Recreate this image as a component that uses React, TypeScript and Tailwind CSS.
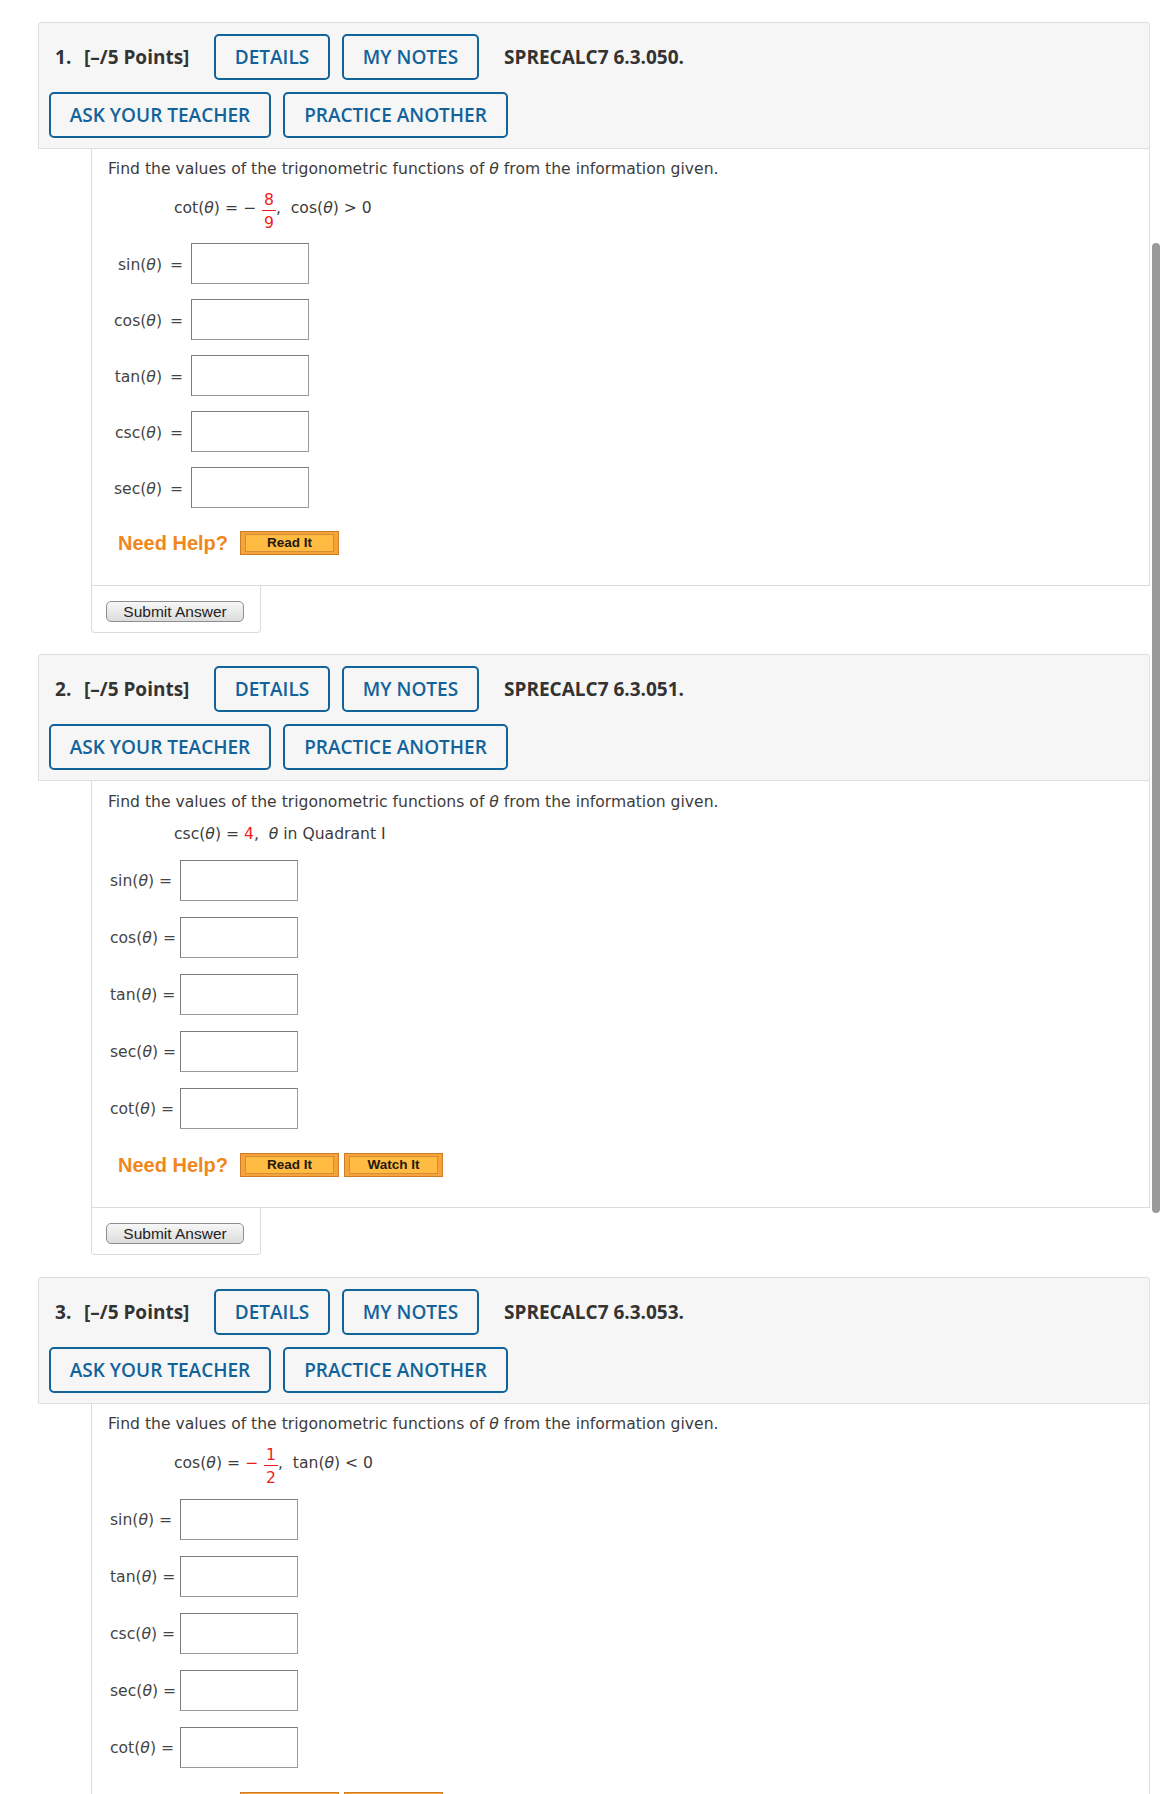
import React from "react";

const T = () => <span className="italic">θ</span>;

function Btn({ w, children }: { w: string; children: React.ReactNode }) {
  return (
    <div
      className={`${w} h-[46px] flex items-center justify-center rounded-[5px] border-2 border-[#12639a] text-[#12639a] text-[19px] font-semibold`}
      style={{ fontFamily: "'Open Sans', sans-serif" }}
    >
      {children}
    </div>
  );
}

function Header({ n, code }: { n: number; code: string }) {
  return (
    <div
      className="rounded-t-[3px] border border-[#dedede] bg-[#f6f6f6] px-[10px] pt-[11px] pb-[10px]"
      style={{ fontFamily: "'Open Sans', sans-serif" }}
    >
      <div className="flex items-center">
        <span className="ml-[6px] w-[29px] text-[19px] font-bold text-[#333]">{n}.</span>
        <span className="w-[130px] text-[19px] font-bold text-[#333]">[–/5 Points]</span>
        <Btn w="w-[116px]">DETAILS</Btn>
        <div className="w-[12px]" />
        <Btn w="w-[137px]">MY NOTES</Btn>
        <span className="ml-[25px] text-[19px] font-bold text-[#333]">SPRECALC7 {code}.</span>
      </div>
      <div className="mt-[12px] flex">
        <Btn w="w-[222px]">ASK YOUR TEACHER</Btn>
        <div className="w-[12px]" />
        <Btn w="w-[225px]">PRACTICE ANOTHER</Btn>
      </div>
    </div>
  );
}

function HelpBtn({ children }: { children: React.ReactNode }) {
  return (
    <div className="w-[99px] h-[24px] border border-[#cf7d25] bg-[#f5a33a] px-[4px] py-[2px]">
      <div
        className="h-full border border-[#d88b35] bg-[#ffbb42] flex items-center justify-center text-[13.5px] font-bold text-[#1f1a10]"
        style={{ fontFamily: "'Liberation Sans', Arial, sans-serif" }}
      >
        {children}
      </div>
    </div>
  );
}

function NeedHelp({ watch, mt }: { watch?: boolean; mt: string }) {
  return (
    <div className={`${mt} flex items-center h-[24px] ml-[10px]`}>
      <span
        className="text-[20px] font-bold text-[#f0871b] mr-[12px]"
        style={{ fontFamily: "'Liberation Sans', Arial, sans-serif" }}
      >
        Need Help?
      </span>
      <HelpBtn>Read It</HelpBtn>
      {watch && (
        <>
          <div className="w-[5px]" />
          <HelpBtn>Watch It</HelpBtn>
        </>
      )}
    </div>
  );
}

function Input() {
  return <div className="w-[118px] h-[41px] border border-[#9a9a9a] border-t-[#7b7b7b] border-l-[#7b7b7b] bg-white" />;
}

function Frac({ num, den }: { num: string; den: string }) {
  return (
    <span className="inline-flex flex-col items-center text-[#ee1c1c] mx-[6px] mt-[5px]">
      <span className="leading-[20px] px-[2px]">{num}</span>
      <span className="h-[1px] w-full bg-[#ee1c1c]" />
      <span className="leading-[20px] px-[2px] mt-[2px]">{den}</span>
    </span>
  );
}

function Submit() {
  return (
    <div className="ml-[53px] w-[170px] h-[47px] border-x border-b border-[#dcdcdc] rounded-b-[4px] pl-[14px] pt-[15px]">
      <div
        className="w-[138px] h-[21px] rounded-[5px] border border-[#8e8e8e] bg-gradient-to-b from-[#f7f7f7] to-[#dcdcdc] flex items-center justify-center text-[15.5px] text-[#222]"
        style={{ fontFamily: "'Liberation Sans', Arial, sans-serif" }}
      >
        Submit Answer
      </div>
    </div>
  );
}

const FIND = (
  <div className="leading-[20px]">
    Find the values of the trigonometric functions of <T /> from the information given.
  </div>
);

const bodyCls =
  "ml-[53px] border-x border-b border-[#dcdcdc] pl-[16px] pb-[30px] text-[#3c3c3c] text-[15.6px]";
const bodyFont = { fontFamily: "'DejaVu Sans', Verdana, sans-serif" };

function Q1() {
  const rows = ["sin", "cos", "tan", "csc", "sec"];
  return (
    <div className="mb-[21px]">
      <Header n={1} code="6.3.050" />
      <div className={`${bodyCls} pt-[10px]`} style={bodyFont}>
        {FIND}
        <div className="mt-[8px] ml-[66px] h-[44px] flex items-center">
          <span>cot(<T />) = −</span>
          <Frac num="8" den="9" />
          <span className="-ml-[6px]">, &nbsp;cos(<T />) &gt; 0</span>
        </div>
        <div className="mt-[12px] flex flex-col gap-[15px]">
          {rows.map((r) => (
            <div key={r} className="flex items-center h-[41px] text-[#444]">
              <span className="w-[54px] text-right pt-[5px] whitespace-nowrap">{r}(<T />)</span>
              <span className="w-[29px] text-center pt-[5px]">=</span>
              <Input />
            </div>
          ))}
        </div>
        <NeedHelp mt="mt-[23px]" />
      </div>
      <Submit />
    </div>
  );
}

function Rows({ rows }: { rows: string[] }) {
  return (
    <div className="flex flex-col gap-[16px]">
      {rows.map((r) => (
        <div key={r} className="flex items-center h-[41px] text-[#444]">
          <span className="w-[72px] pl-[2px] pt-[3px] whitespace-nowrap">{r}(<T />) =</span>
          <Input />
        </div>
      ))}
    </div>
  );
}

function Q2() {
  return (
    <div className="mb-[22px]">
      <Header n={2} code="6.3.051" />
      <div className={`${bodyCls} pt-[11px]`} style={bodyFont}>
        {FIND}
        <div className="mt-[12px] ml-[66px] leading-[20px]">
          csc(<T />) = <span className="text-[#ee1c1c]">4</span>, &nbsp;<T /> in Quadrant I
        </div>
        <div className="mt-[16px]">
          <Rows rows={["sin", "cos", "tan", "sec", "cot"]} />
        </div>
        <NeedHelp watch mt="mt-[24px]" />
      </div>
      <Submit />
    </div>
  );
}

function Q3() {
  return (
    <div>
      <Header n={3} code="6.3.053" />
      <div className={`${bodyCls} pt-[10px]`} style={bodyFont}>
        {FIND}
        <div className="mt-[8px] ml-[66px] h-[44px] flex items-center">
          <span>cos(<T />) = <span className="text-[#ee1c1c]">−</span></span>
          <Frac num="1" den="2" />
          <span className="-ml-[6px]">, &nbsp;tan(<T />) &lt; 0</span>
        </div>
        <div className="mt-[13px]">
          <Rows rows={["sin", "tan", "csc", "sec", "cot"]} />
        </div>
        <NeedHelp watch mt="mt-[24px]" />
      </div>
      <Submit />
    </div>
  );
}

export default function App() {
  return (
    <div className="relative min-h-[1794px] bg-white pt-[22px] pl-[38px] pr-[11px] overflow-hidden">
      <Q1 />
      <Q2 />
      <Q3 />
      <div className="absolute right-[1px] top-[243px] w-[8px] h-[970px] rounded-full bg-[#9a9a9a]" />
    </div>
  );
}
